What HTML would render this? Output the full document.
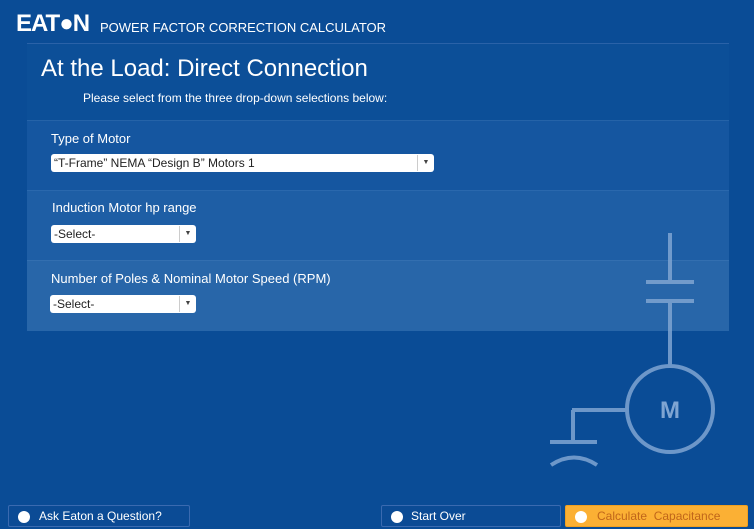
<!DOCTYPE html>
<html><head><style>
body{margin:0;width:754px;height:529px;background:#0a4c96;font-family:"Liberation Sans",sans-serif;color:#fff;position:relative;overflow:hidden}
.a{position:absolute}
.sel{position:absolute;background:#fff;border-radius:3px;color:#222;font-size:12px;height:18px;line-height:19px;padding-left:3px;box-sizing:border-box}
.sel .ar{position:absolute;right:0;top:1px;width:16px;height:16px;border-left:1px solid #ccc;font-size:7px;text-align:center;line-height:16px;color:#444}
.btn{position:absolute;top:505px;height:22px;border:1px solid #3a6ab0;border-radius:2px;background:#0b4b95;font-size:12px;line-height:21px;box-sizing:border-box}
.btn i{position:absolute;left:9px;top:5px;width:12px;height:12px;border-radius:50%;background:#fff}
</style></head><body>
<div class="a" style="left:16px;top:12px;font-weight:bold;font-size:24px;letter-spacing:-1px;line-height:24px">EAT●N</div>
<div class="a" style="left:100px;top:20px;font-size:13px">POWER FACTOR CORRECTION CALCULATOR</div>
<div class="a" style="left:27px;top:43px;width:702px;height:287px;background:#0c4f98;border-top:1px solid #2a62a8"></div>
<div class="a" style="left:41px;top:55px;font-size:24px">At the Load: Direct Connection</div>
<div class="a" style="left:83px;top:91px;font-size:12px">Please select from the three drop-down selections below:</div>
<div class="a" style="left:27px;top:120px;width:702px;height:70px;background:#1556a0;border-top:1px solid #2563a8"></div>
<div class="a" style="left:27px;top:190px;width:702px;height:70px;background:#1e5ea5;border-top:1px solid #2a68ad"></div>
<div class="a" style="left:27px;top:260px;width:702px;height:70px;background:#2866a9;border-top:1px solid #336fb0"></div>
<div class="a" style="left:51px;top:131px;font-size:13px">Type of Motor</div>
<div class="sel" style="left:51px;top:154px;width:383px">“T-Frame” NEMA “Design B” Motors 1<span class="ar">▼</span></div>
<div class="a" style="left:52px;top:200px;font-size:13px">Induction Motor hp range</div>
<div class="sel" style="left:51px;top:225px;width:145px">-Select-<span class="ar">▼</span></div>
<div class="a" style="left:51px;top:271px;font-size:13px">Number of Poles &amp; Nominal Motor Speed (RPM)</div>
<div class="sel" style="left:50px;top:295px;width:146px">-Select-<span class="ar">▼</span></div>
<svg class="a" style="left:0;top:0" width="754" height="529">
<g stroke="#7fa5d2" stroke-width="4" fill="none" opacity="0.85">
<line x1="670" y1="233" x2="670" y2="282"/>
<line x1="646" y1="282" x2="694" y2="282"/>
<line x1="646" y1="301" x2="694" y2="301"/>
<line x1="670" y1="301" x2="670" y2="366"/>
<circle cx="670" cy="409" r="43"/>
<line x1="627" y1="410" x2="572" y2="410"/>
<line x1="573" y1="410" x2="573" y2="442"/>
<line x1="550" y1="442" x2="597" y2="442"/>
<path d="M551 465 Q574 450 597 465"/>
</g>
<text x="670" y="418" fill="#7fa5d2" font-family="Liberation Sans" font-weight="bold" font-size="24" text-anchor="middle">M</text>
</svg>
<div class="btn" style="left:8px;width:182px"><i></i><span style="margin-left:30px">Ask Eaton a Question?</span></div>
<div class="btn" style="left:381px;width:180px"><i></i><span style="margin-left:29px">Start Over</span></div>
<div class="btn" style="left:565px;width:183px;background:#fbb034;border-color:#f0a020;color:#c0661a"><i></i><span style="margin-left:31px">Calculate &nbsp;Capacitance</span></div>
</body></html>
